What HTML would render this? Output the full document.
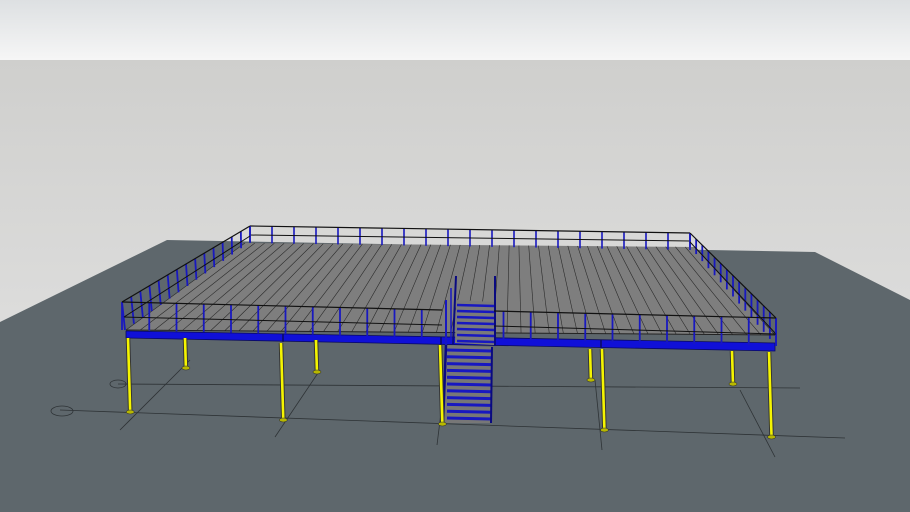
<!DOCTYPE html>
<html><head><meta charset="utf-8"><style>
html,body{margin:0;padding:0;width:910px;height:512px;overflow:hidden;background:#e2e2e2}
svg{display:block}
</style></head><body>
<svg id="s" width="910" height="512" viewBox="0 0 910 512" xmlns="http://www.w3.org/2000/svg">
<defs>
<linearGradient id="sky" x1="0" y1="0" x2="0" y2="1"><stop offset="0" stop-color="#dde0e2"/><stop offset="1" stop-color="#f6f6f6"/></linearGradient>
<linearGradient id="bg" x1="0" y1="0" x2="0" y2="1"><stop offset="0" stop-color="#cfcfcd"/><stop offset="1" stop-color="#e6e6e6"/></linearGradient>
</defs>
<rect x="0" y="0" width="910" height="60" fill="url(#sky)"/>
<rect x="0" y="60" width="910" height="452" fill="url(#bg)"/>
<polygon points="0,322 167,240 815,252 910,300 910,512 0,512" fill="#5e676c"/>
<g stroke="#2e3336" stroke-width="0.8" fill="none">
<line x1="60" y1="410" x2="845" y2="438"/>
<line x1="118" y1="384" x2="800" y2="388"/>
<ellipse cx="62" cy="411" rx="11" ry="5"/>
<ellipse cx="118" cy="384" rx="8" ry="4"/>
<line x1="120" y1="430" x2="190" y2="360"/>
<line x1="275" y1="437" x2="320" y2="370"/>
<line x1="437" y1="445" x2="445" y2="380"/>
<line x1="602" y1="450" x2="595" y2="380"/>
<line x1="775" y1="457" x2="740" y2="390"/>
</g>
<g id="deck"></g>
</svg>
<script>
const ns="http://www.w3.org/2000/svg",g=document.getElementById('deck');
function el(t,a){const e=document.createElementNS(ns,t);for(const k in a)e.setAttribute(k,a[k]);g.appendChild(e);return e}
function L(x1,y1,x2,y2,c,w){return el('line',{x1,y1,x2,y2,stroke:c,'stroke-width':w})}
const lerp=(a,b,t)=>a+(b-a)*t;
const B='#1818c0';
el('polygon',{points:'245,243 695,247 775,335 126,330',fill:'#7e7e7e'});
for(let i=0;i<=46;i++){const t=i/46;
 const bx=lerp(245,695,t),by=lerp(243,247,t),fx=lerp(126,775,t),fy=lerp(330,335,t);
 L(bx,by,fx,fy,'#2a2a2a',0.6);}
for(let i=0;i<=20;i++){const t=i/20;const x=lerp(250,690,t),y=lerp(226,233,t);L(x,y,x,y+17,B,1.6);}
L(250,226,690,233,'#111',1.2);L(250,235,690,241,'#111',1);
for(let i=0;i<=14;i++){const t=i/14;const x=lerp(122,250,t),y=lerp(302,226,t);L(x,y,x+(1-t)*3,y+28-t*12,B,1.8);}
L(122,302,250,226,'#111',1.2);L(124,317,250,236,'#111',1);
for(let i=0;i<=14;i++){const t=i/14;const x=lerp(690,776,t),y=lerp(233,318,t);L(x,y,x,y+14+t*14,B,1.8);}
L(690,233,776,318,'#111',1.2);L(690,242,776,334,'#111',1);
el('polygon',{points:'126,331 775,343 775,351 126,338',fill:'#1010d8',stroke:'#0a0a60','stroke-width':0.8});
L(126,330,775,335,'#222',1);
[283,441,601].forEach(x=>{const y=lerp(331,343,(x-126)/649);L(x,y,x,y+8,'#0a0a60',1.5)});
el('polygon',{points:'446,345 492,347 491,423 444,423',fill:'#777'});
for(let i=0;i<11;i++){const y=350+i*6.8;L(447,y,491,y+1,B,3);}
L(446,345,443,424,'#0a0a80',2.5);L(492,347,491,423,'#0a0a80',2);
el('polygon',{points:'456,300 494,302 494,345 455,343',fill:'#7a7a7a'});
for(let i=0;i<7;i++){const y=305+i*6;L(457,y,494,y+1,B,2.5);}
L(456,276,453,345,'#0a0a80',2);L(495,276,495,346,'#0a0a80',2);
L(446,300,446,345,B,2);L(451,288,451,340,B,1.5);
for(let i=0;i<=24;i++){const t=i/24;const x=lerp(122,776,t);if(x>440&&x<496)continue;const y=lerp(302,318,t);L(x,y,x,y+28,B,1.8);}
L(122,302,442,310,'#111',1.2);L(494,311,776,318,'#111',1.2);
L(124,317,442,325,'#111',1);L(494,326,776,334,'#111',1);
function post(x,y1,y2){L(x,y1,x+(y2-y1)*0.03,y2,'#333',4.5);L(x,y1,x+(y2-y1)*0.03,y2,'#f5f500',2.6);el('ellipse',{cx:x+(y2-y1)*0.03,cy:y2,rx:4,ry:2,fill:'#b8b800',stroke:'#333','stroke-width':0.6});}
post(185,338,368);post(316,340,372);post(590,349,380);post(732,351,384);
post(128,338,412);post(281,343,420);post(440,345,424);post(602,349,430);post(769,352,437);
</script>
</body></html>
